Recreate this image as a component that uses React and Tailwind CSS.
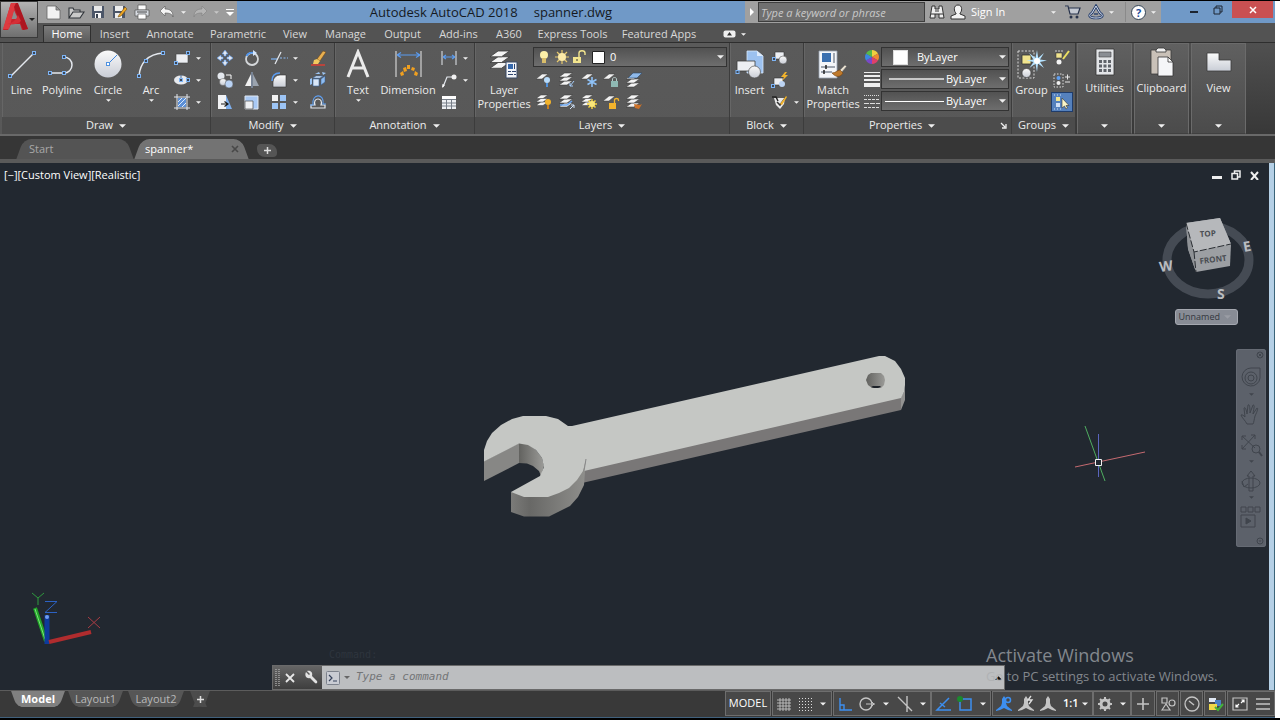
import { useState } from 'react'

const BLUE = '#7db4f5'
const PALE = '#e4e8ee'

function Arrow({ className = 'w-[7px] h-[4px]', color = '#f0f0f0' }) {
  return (
    <svg viewBox="0 0 8 4" className={'shrink-0 ' + className} aria-hidden="true">
      <path d="M0 0h8L4 4z" fill={color} />
    </svg>
  )
}

function Icon({ s = 18, children }) {
  return (
    <svg width={s} height={s} viewBox={`0 0 ${s} ${s}`} fill="none" className="shrink-0" aria-hidden="true">
      {children}
    </svg>
  )
}

function Node({ x, y }) {
  return <rect x={x - 1.5} y={y - 1.5} width="3" height="3" fill="#3d4654" stroke={BLUE} />
}

/* ---------- quick access icons ---------- */

const quick = [
  ['New', <path key="a" d="M2 3h9l4 4v9H2z M11 3v4h4" fill="#f2f2f2" stroke="#666" strokeWidth=".8" />],
  ['Open', <path key="a" d="M2 15V5h4l1 2h6v2M2 15l4-6h11l-4 6z" fill="#c9c9c9" stroke="#2f3338" strokeWidth="1.1" />],
  ['Save', (
    <g key="a">
      <path d="M3 3h12v12H3z" fill="#4c5668" />
      <path d="M5 3h8v5H5z" fill="#e9e9e9" />
      <path d="M6 10h6v5H6z" fill="#f6f6f6" />
      <path d="M7 11h2v4H7z" fill="#39414f" />
    </g>
  )],
  ['Save As', (
    <g key="a">
      <path d="M2 3h12v12H2z" fill="#4c5668" />
      <path d="M4 3h8v5H4zM4 10h7v5H4z" fill="#eee" />
      <path d="M8 12l6-8 2 2-6 7-3 1z" fill="#f0a824" stroke="#6b4a10" strokeWidth=".6" />
    </g>
  )],
  ['Plot', (
    <g key="a">
      <path d="M5 2h8v5H5z" fill="#fafafa" stroke="#555" strokeWidth=".7" />
      <path d="M2 7h14v6H2z" fill="#d8dce2" stroke="#555" strokeWidth=".7" />
      <path d="M5 11h8v5H5z" fill="#fff" stroke="#555" strokeWidth=".7" />
      <path d="M4 9h10" stroke="#444" />
    </g>
  )],
]

/* ---------- large ribbon icons ---------- */

const LineIcon = () => (
  <Icon s={30}>
    <path d="M3 28L27 4" stroke={PALE} strokeWidth="1.5" />
    <Node x={3} y={27} />
    <Node x={27} y={4} />
  </Icon>
)

const PolylineIcon = () => (
  <Icon s={30}>
    <path d="M2 24h15a8 8 0 0 0 0-16" stroke={PALE} strokeWidth="1.5" />
    <Node x={3} y={24} />
    <Node x={17} y={24} />
    <Node x={17} y={8} />
  </Icon>
)

const CircleIcon = () => (
  <Icon s={30}>
    <circle cx="15" cy="15" r="13.5" fill="url(#ball)" />
    <path d="M15 15l9-9" stroke="#3f87dd" />
    <rect x="13.5" y="13.5" width="3" height="3" fill="#fff" stroke="#4f92e0" />
  </Icon>
)

const ArcIcon = () => (
  <Icon s={30}>
    <path d="M3 27C4 14 12 5 27 4" stroke={PALE} strokeWidth="1.5" />
    <Node x={3} y={27} />
    <Node x={10} y={12} />
    <Node x={27} y={4} />
  </Icon>
)

const TextIcon = () => (
  <Icon s={30}>
    <path d="M5 28L15 3l10 25M9 19h12" stroke="#ececec" strokeWidth="3" />
  </Icon>
)

const DimensionIcon = () => (
  <Icon s={30}>
    <path d="M3 2v26M28 2v26" stroke="#c8c8c8" strokeWidth="1.3" />
    <path d="M4 6h23M4 6l4-2.500M4 6l4 2.500M27 6l-4-2.500M27 6l-4 2.500" stroke="#5b9cf0" strokeWidth="1.2" />
    <path d="M7 24l3-2 1 4-3 1zM10 19l3-1 1 4-3 1zM14 16h3v4h-3zM19 18l3 1-1 3-3-1zM22 22l3 2-1 3-3-1z" fill="#f0a020" />
  </Icon>
)

function Stack({ x, y, k = 1, fill = '#f4f4f4' }) {
  return (
    <g transform={`translate(${x} ${y}) scale(${k})`} fill={fill} stroke="#3a3a3a" strokeWidth=".7">
      <path d="M0 15h10l7-5H7z" />
      <path d="M0 10h10l7-5H7z" />
      <path d="M0 5h10l7-5H7z" />
    </g>
  )
}

const LayerPropsIcon = () => (
  <Icon s={30}>
    <Stack x={1} y={2} k={1.15} />
    <path d="M17 13h11v16H17z" fill="#f2f4f8" stroke="#3b4a66" />
    <path d="M19 15h5v5h-5z" fill="#3568ad" />
    <path d="M25.500 15v5M19 22.500h3M23 22.500h4M19 25.500h5M25 25.500h2" stroke="#2f456e" />
  </Icon>
)

const InsertIcon = () => (
  <Icon s={30}>
    <path d="M12 2h10l6 5v17H12z" fill="#9cc1ef" stroke="#d8e8fb" strokeWidth=".8" />
    <path d="M22 2v5h6z" fill="#dceafb" />
    <path d="M2 12h18v10H2z" fill="#eceef2" stroke="#3c3c3c" strokeWidth=".8" />
    <circle cx="19.500" cy="23" r="6" fill="url(#ball)" stroke="#555" strokeWidth=".7" />
    <Node x={2.500} y={23} />
  </Icon>
)

const MatchIcon = () => (
  <Icon s={30}>
    <path d="M1 2h18v27H1z" fill="#f4f6f9" stroke="#9aa4b4" strokeWidth=".8" />
    <path d="M4 4h9v9H4z" fill="#3b70b0" />
    <path d="M16 4v10M3 18h14M3 23h11" stroke="#4a5668" />
    <path d="M8 16v4M6 21v4" stroke="#222" strokeWidth="1.500" />
    <path d="M21 22l6-6 1.500 1.500-5 6z" fill="#e8e0d0" stroke="#6a6a6a" strokeWidth=".5" />
    <path d="M14 24c4 0 5-3 8-3l3 3c-2 4-7 5-11 0z" fill="#bf7a2c" stroke="#713f0d" strokeWidth=".6" />
  </Icon>
)

const GroupIcon = () => (
  <Icon s={30}>
    <path d="M1 2h16v27H1z" stroke="#d5d5d5" strokeDasharray="2 1.500" />
    <path d="M5 6h9v9H5z" fill="#f1e48e" stroke="#333" strokeWidth=".8" />
    <circle cx="9.500" cy="24" r="4.500" fill="url(#ball)" stroke="#333" strokeWidth=".6" />
    <path d="M20 1l1.200 8 5.800-5-4 6.500 7 1-7 1.500 4 6-6-4.500L20 23l-1.500-8.500-6 4.500 4-6-7-1.500 7-1L12 4l6.500 5z" fill="#b4e2ff" />
    <circle cx="20" cy="12" r="3" fill="#fff" />
  </Icon>
)

const UtilitiesIcon = () => (
  <Icon s={30}>
    <path d="M6 2h18v26H6z" fill="#e3e5e8" stroke="#333" strokeWidth=".8" />
    <path d="M9 5h12v5H9z" fill="#8a8e94" stroke="#444" strokeWidth=".6" />
    <path d="M9 13h3v3H9zM13.500 13h3v3h-3zM18 13h3v3h-3zM9 17.500h3v3H9zM13.500 17.500h3v3h-3zM18 17.500h3v3h-3zM9 22h3v3H9zM13.500 22h3v3h-3zM18 22h3v3h-3z" fill="#5f6369" />
  </Icon>
)

const ClipboardIcon = () => (
  <Icon s={30}>
    <path d="M4 3h20v24H4z" fill="#c9c1b8" stroke="#3a3a3a" strokeWidth=".8" />
    <path d="M9 3l2-2h6l2 2v2H9z" fill="#f0f0f0" stroke="#333" strokeWidth=".8" />
    <path d="M11 10h10l5 5v14H11z" fill="#f5f6f8" stroke="#333" strokeWidth=".8" />
    <path d="M21 10v5h5z" fill="#fff" stroke="#333" strokeWidth=".8" />
  </Icon>
)

const ViewIcon = () => (
  <Icon s={30}>
    <path d="M3 6h12v7h12v11H3z" fill="url(#ball)" stroke="#3a3a3a" strokeWidth=".8" />
  </Icon>
)

/* ---------- small ribbon icons ---------- */

const drawSmall = [
  ['Rectangle', <g key="i"><path d="M3 5h12v9H3z" fill="#eceef2" stroke="#444" strokeWidth=".6" /><Node x={3} y={14} /><Node x={15} y={4} /></g>],
  ['Ellipse', <g key="i"><ellipse cx="8" cy="9" rx="7" ry="4.500" fill="#e6e9ee" /><path d="M8 9V4" stroke="#4a6a96" /><Node x={8} y={9} /><Node x={15} y={9} /></g>],
  ['Hatch', <g key="i"><path d="M1 4h16M1 15h16M4 1v16M14 1v16" stroke={PALE} /><path d="M5 5h8v9H5z" fill="#5b8fd6" /><path d="M5 9l4-4M5 13l8-8M9 14l4-4" stroke="#dce9fb" /></g>],
]

const modifySmall = [
  ['Move', <path key="i" d="M9 1l3 4h-2v2H8V5H6zM9 17l3-4h-2v-2H8v2H6zM1 9l4-3v2h2v2H5v2zM17 9l-4-3v2h-2v2h2v2z" fill={PALE} stroke="#5a9af0" strokeWidth=".6" />],
  ['Rotate', <g key="i"><circle cx="9" cy="10" r="6" stroke="#d4d7da" strokeWidth="1.800" /><path d="M3.500 7A6 6 0 0 1 11 4" stroke="#4d94ee" strokeWidth="1.800" /><path d="M10 1l4 3-4 3z" fill="#d5e6fc" /></g>],
  ['Trim', <g key="i"><path d="M1 10h6" stroke={BLUE} strokeWidth="1.200" /><path d="M5 15l6-12" stroke={PALE} strokeWidth="1.300" /><path d="M10 9h8" stroke="#8dbcf5" strokeDasharray="2 1.500" /></g>],
  ['Erase', <g key="i"><path d="M2 16h14" stroke="#e23c30" strokeWidth="1.400" /><path d="M8 10l6-8 3 1-6 9z" fill="#e8b050" stroke="#6a3f10" strokeWidth=".5" /><path d="M4 15l1-4 3-1 3 2-2 3z" fill="#f2c95f" /></g>],
  ['Copy', <g key="i"><circle cx="5" cy="5" r="3.500" fill={PALE} /><circle cx="7" cy="11" r="3.500" fill="url(#ball)" stroke="#555" strokeWidth=".5" /><circle cx="13" cy="13" r="4" fill="#b9d2f4" stroke="#555" strokeWidth=".5" /><path d="M10 4h5v4" stroke="#fff" /></g>],
  ['Mirror', <g key="i"><path d="M8 3v12H2z" fill="#f0f0f0" /><path d="M10 3v12h6z" fill="#9aa3ae" /><path d="M9 1v16" stroke="#a9c8f4" strokeWidth=".8" /></g>],
  ['Fillet', <g key="i"><path d="M3 16V11a7 7 0 0 1 7-7h6v12z" fill="url(#ball)" stroke="#333" strokeWidth=".6" /><path d="M2 10c0-5 3-8 8-8" stroke="#5b9cf0" strokeWidth="1.500" /></g>],
  ['Explode', <g key="i"><path d="M4 7l3-2h7l-3 2zM4 8h6v7H4z" fill="#dbe8f8" stroke="#3b6aa4" strokeWidth=".6" /><path d="M12 8l4-3v6l-4 3z" fill="#8fbcf0" stroke="#2f5b91" strokeWidth=".5" /><path d="M13 1l4 1-3 2zM1 8l2-1v6l-2 1zM6 3l4-2 1 2z" fill="#9cc6f6" /></g>],
  ['Stretch', <g key="i"><path d="M2 2h8v14H2z" fill="#f2f3f5" /><path d="M10 2l6 14h-6z" fill="#7fb0ee" /><path d="M5 11h6M8.500 8.500L12 11l-3.500 2.500" stroke="#1d1d1d" strokeWidth="1.200" /></g>],
  ['Scale', <g key="i"><path d="M2 3h13v13H2z" fill="#a9c9f4" stroke="#e1e8f2" /><path d="M2 8h8v8H2z" fill="#eef0f3" stroke="#4a4a4a" strokeWidth=".7" /></g>],
  ['Array', <g key="i"><path d="M2 2h6v6H2z" fill="#f2f2f2" /><path d="M10 2h6v6h-6zM2 10h6v6H2zM10 10h6v6h-6z" fill="#9cc4f5" /></g>],
  ['Offset', <g key="i"><path d="M2 15h14v-3h-4c3-8-9-8-6 0H2z" stroke={PALE} strokeWidth="1.200" /><path d="M1 12h3C2 0 16 0 14 11h3" stroke="#5f9ff0" strokeWidth="1.100" /></g>],
]

const annotationSmall = [
  ['Linear', <g key="i"><path d="M2 2v14M16 2v14" stroke={PALE} /><path d="M3 8h12M3 8l3-2M3 8l3 2M15 8l-3-2M15 8l-3 2" stroke="#5b9cf0" strokeWidth="1.200" /></g>],
  ['Leader', <g key="i"><path d="M3 16l4-10h5" stroke={PALE} strokeWidth="1.200" /><path d="M2 17l.5-4 2.500 1z" fill="#fff" /><circle cx="14" cy="6" r="2.500" fill="#f2f2f2" /></g>],
  ['Table', <g key="i"><path d="M2 3h14v13H2z" fill="#eef0f3" /><path d="M2 3h14v3H2z" fill="#fff" /><path d="M2 6.500h14M2 10h14M2 13h14M6.500 6.500V16M11.500 6.500V16" stroke="#777e88" /></g>],
]

const gold = '#f2b32c'
const flat = <path d="M1 8h6l6-5H7z" fill="#f2f2f2" stroke="#3a3a3a" strokeWidth=".5" />
const layerSmall = [
  ['Layer Off', <g key="i">{flat}<circle cx="12" cy="9" r="3" fill="#b9dcfb" /><path d="M11 12h2v4h-2z" fill="#4f92dc" /></g>],
  ['Isolate', <g key="i"><Stack x={1} y={2} k={0.8} /><path d="M16 10l-4 5m0-3v3h3" stroke="#a6cdfa" /></g>],
  ['Freeze', <g key="i">{flat}<path d="M12 6v10M7.500 8.500l9 5M16.500 8.500l-9 5" stroke="#8fc2f8" strokeWidth="1.600" /></g>],
  ['Lock', <g key="i">{flat}<path d="M9 10h7v6H9z" fill="#8fb9b3" /><path d="M10.500 10V8c0-2 4-2 4 0v2" stroke="#b7ccc9" /></g>],
  ['Make Current', <g key="i"><Stack x={1} y={4} k={0.8} /><path d="M3 7h9l5-5H8z" fill="#8fb9ea" stroke="#2c4666" strokeWidth=".6" /></g>],
  ['Turn All On', <g key="i"><Stack x={1} y={2} k={0.7} /><circle cx="13" cy="9" r="3" fill={gold} /><path d="M12 12h2v4h-2z" fill="#c97f1b" /></g>],
  ['Unisolate', <g key="i"><Stack x={1} y={2} k={0.8} /><path d="M2 12h7l5-4" stroke="#6aa6f2" strokeWidth="1.600" /><path d="M12 16l4-4m-3 0h3v3" stroke="#cfe3fb" /></g>],
  ['Thaw', <g key="i"><Stack x={1} y={2} k={0.7} /><path d="M12 6v10M7 11h10M8.500 7.500l7 7M15.500 7.500l-7 7" stroke="#f6d33c" strokeWidth="1.500" /><circle cx="12" cy="11" r="3" fill="#fae67a" /></g>],
  ['Unlock', <g key="i">{flat}<path d="M7 10h7v6H7z" fill={gold} /><path d="M12.500 10V7c0-2 4-2 4 0v1" stroke={gold} strokeWidth="1.300" /></g>],
  ['Match Layer', <g key="i"><Stack x={1} y={2} k={0.8} /><path d="M9 11l6 1 2-1-3 5-4-1z" fill="#cc7229" /></g>],
]

const blockSmall = [
  ['Create', <g key="i"><path d="M4 3h9v7H4z" fill="#eceef2" stroke="#333" strokeWidth=".6" /><circle cx="12" cy="11" r="4" fill="url(#ball)" stroke="#444" strokeWidth=".5" /><Node x={3} y={10} /></g>],
  ['Edit', <g key="i"><path d="M3 7h9v7H3z" fill="#eceef2" stroke="#333" strokeWidth=".6" /><circle cx="11" cy="13" r="3" fill="#bcd3f2" /><Node x={2} y={15} /><path d="M14 1l-4 5h3l-2 4 6-6h-3l2-3z" fill={gold} /></g>],
  ['Edit Attributes', <g key="i"><path d="M3 5h11l-1 6-4 5-4-4z" fill="#e9e9e9" /><path d="M1 4h4l2 4" stroke="#222" strokeWidth="1.500" /><path d="M6 9l3 3 6-8" stroke="#333" strokeWidth="1.500" /><path d="M9 11l6-8 1 1-5 8z" fill={gold} /></g>],
]

const groupSmall = [
  ['Ungroup', <g key="i"><path d="M2 2h9" stroke="#ccc" strokeDasharray="2 1" /><path d="M3 4h6v5H3z" fill="#f1e48e" stroke="#333" strokeWidth=".5" /><path d="M10 10l6-8" stroke="#eadf62" strokeWidth="2" /><circle cx="6" cy="13" r="2.500" fill="#f4f4f4" /></g>],
  ['Group Edit', <g key="i"><path d="M1 3h9v13H1z" stroke="#ddd" strokeDasharray="1.500 1.500" /><circle cx="5.500" cy="7" r="2" fill="#5f9ff0" /><circle cx="5.500" cy="12" r="2" fill="#f0f0f0" /><path d="M12 6h5M14.500 3.500v5M12 11h5" stroke="#e8e8e8" /></g>],
  ['Group Selection', <g key="i"><path d="M3 4h4v4H3z" fill="#f1e48e" /><path d="M3 10h4v4H3z" fill="#cfe0f7" /><path d="M1 2h8M1 16h8" stroke="#cfe0f7" strokeDasharray="1 2" /><path d="M9 5v10l2.500-2 1.500 3 1.500-1-1.500-2.500h3z" fill="#fbf6c8" stroke="#333" strokeWidth=".6" /></g>],
]

/* ---------- ribbon parts ---------- */

function Small({ item, arrow, active }) {
  return (
    <div className="flex h-[22px] items-center">
      <button
        type="button"
        aria-label={item[0]}
        className={'flex h-5 w-[22px] items-center justify-center ' + (active ? 'border border-[#1f3c6b] bg-[#5581bd]' : '')}
      >
        <Icon>{item[1]}</Icon>
      </button>
      {arrow && (
        <button type="button" aria-label={item[0] + ' options'} className="flex w-[11px] justify-center">
          <Arrow className="h-[3px] w-[5px]" />
        </button>
      )}
    </div>
  )
}

function Big({ icon, label, arrow, width }) {
  return (
    <button type="button" className={'flex shrink-0 flex-col items-center pt-[2px] ' + width}>
      {icon}
      <span className="mt-1 text-center leading-[14px]">{label}</span>
      {arrow && <Arrow className="mt-[2px] h-[3px] w-[5px]" />}
    </button>
  )
}

function Panel({ title, width, launcher, children }) {
  return (
    <section className={'flex shrink-0 flex-col border-r border-[#3c3c3c] shadow-[inset_1px_0_#666] ' + width}>
      <div className="flex h-[74px] pt-1">{children}</div>
      <div className="flex flex-1 items-center bg-[#4c4c4c]">
        <button type="button" className="flex flex-1 items-center justify-center gap-[6px]">
          {title}
          <Arrow />
        </button>
        {launcher && (
          <button type="button" aria-label={title + ' settings'} className="mr-1">
            <svg width="7" height="7" viewBox="0 0 7 7" fill="none" stroke="#eee" aria-hidden="true">
              <path d="M1 1l4 4M6 2v4H2" strokeWidth="1.300" />
            </svg>
          </button>
        )}
      </div>
    </section>
  )
}

function Collapsed({ label, icon }) {
  return (
    <button type="button" className="mr-[2px] flex w-[55px] shrink-0 flex-col items-center border border-[#6b6b6b] border-b-[#404040] bg-linear-to-b from-[#606060] to-[#4b4b4b] pt-[3px]">
      {icon}
      <span className="mt-1 leading-[14px]">{label}</span>
      <Arrow className="mt-auto mb-[5px] h-1 w-[7px]" />
    </button>
  )
}

function Combo({ label, value, before, className = '' }) {
  return (
    <div className={'flex h-5 items-center border border-[#333] bg-linear-to-b from-[#525252] to-[#6e6e6e] pr-[2px] ' + className}>
      {before}
      <select aria-label={label} className="min-w-0 flex-1 appearance-none bg-transparent leading-4 text-white outline-none">
        <option>{value}</option>
      </select>
      <Arrow />
    </div>
  )
}

function Ribbon() {
  return (
    <div className="flex h-[92px] border-t border-[#2e2e2e] bg-linear-to-b from-[#5a5a5a] to-[#585858] pl-[2px]">
      <Panel title="Draw" width="w-[209px]">
        <Big icon={<LineIcon />} label="Line" width="w-[39px]" />
        <Big icon={<PolylineIcon />} label="Polyline" width="w-[42px]" />
        <Big icon={<CircleIcon />} label="Circle" arrow width="w-[50px]" />
        <Big icon={<ArcIcon />} label="Arc" arrow width="w-9" />
        <div className="pl-[2px]">
          {drawSmall.map((item) => <Small key={item[0]} item={item} arrow />)}
        </div>
      </Panel>

      <Panel title="Modify" width="w-[124px]">
        <div className="grid grid-cols-[27px_27px_39px_22px] content-start pl-[3px]">
          {modifySmall.map((item, i) => <Small key={item[0]} item={item} arrow={i % 4 === 2} />)}
        </div>
      </Panel>

      <Panel title="Annotation" width="w-[140px]">
        <Big icon={<TextIcon />} label="Text" arrow width="w-[46px]" />
        <Big icon={<DimensionIcon />} label="Dimension" width="w-[54px]" />
        <div className="pl-[3px]">
          {annotationSmall.map((item, i) => <Small key={item[0]} item={item} arrow={i < 2} />)}
        </div>
      </Panel>

      <Panel title="Layers" width="w-[255px]">
        <Big icon={<LayerPropsIcon />} label={<>Layer<br />Properties</>} width="w-[58px]" />
        <div className="flex-1 pr-[2px]">
          <Combo
            label="Layer"
            value="0"
            before={
              <svg width="76" height="18" viewBox="0 0 76 18" fill="none" aria-hidden="true">
                <circle cx="10" cy="7" r="4" fill="#fdf0a8" />
                <path d="M8 10h4v5H8z" fill="#d9bd6a" />
                <path d="M28 2v14M21 9h14M23 4l10 10M33 4L23 14" stroke="#e8c96a" strokeWidth="1.200" />
                <circle cx="28" cy="9" r="4" fill="#fbe9a8" />
                <path d="M39 9h8v6h-8z" fill="#f3e58e" />
                <path d="M45 9V5c0-3 6-3 6 0v2" stroke="#f3e58e" strokeWidth="1.400" />
                <path d="M43 11v2" stroke="#333" />
                <path d="M58.500 3.500h12v12h-12z" fill="#fff" stroke="#222" />
              </svg>
            }
          />
          <div className="grid grid-cols-[23px_22px_22px_23px_22px] pt-[2px]">
            {layerSmall.map((item) => <Small key={item[0]} item={item} />)}
          </div>
        </div>
      </Panel>

      <Panel title="Block" width="w-[74px]">
        <Big icon={<InsertIcon />} label="Insert" width="w-[39px]" />
        <div>
          {blockSmall.map((item, i) => <Small key={item[0]} item={item} arrow={i === 2} />)}
        </div>
      </Panel>

      <Panel title="Properties" width="w-[208px]" launcher>
        <Big icon={<MatchIcon />} label={<>Match<br />Properties</>} width="w-[58px]" />
        <div className="flex w-[19px] flex-col items-center pt-[3px]">
          <svg width="16" height="63" viewBox="0 0 16 63" fill="none" aria-hidden="true">
            <path d="M8 7V0a7 7 0 0 1 6 3.500z" fill="#f0d040" />
            <path d="M8 7l6-3.500a7 7 0 0 1 0 7z" fill="#f08a30" />
            <path d="M8 7l6 3.500A7 7 0 0 1 8 14z" fill="#e0406a" />
            <path d="M8 7v7a7 7 0 0 1-6-3.500z" fill="#7a48c8" />
            <path d="M8 7l-6 3.500a7 7 0 0 1 0-7z" fill="#3c86e0" />
            <path d="M8 7L2 3.500A7 7 0 0 1 8 0z" fill="#58b848" />
            <path d="M0 22.500h16" stroke="#eee" />
            <path d="M0 26h16" stroke="#eee" strokeWidth="2" />
            <path d="M0 30h16" stroke="#eee" strokeWidth="2" />
            <path d="M0 35h16" stroke="#eee" strokeWidth="4" />
            <path d="M0 45.500h16" stroke="#ddd" strokeDasharray="1 1" />
            <path d="M0 49.500h16M0 57.500h16" stroke="#ddd" strokeDasharray="3 1" />
            <path d="M0 53.500h16" stroke="#ddd" strokeDasharray="5 1" />
          </svg>
        </div>
        <div className="flex flex-1 flex-col gap-[2px] pr-[2px]">
          <Combo
            label="Object colour"
            value="ByLayer"
            before={<span className="mr-[9px] ml-[11px] size-[15px] border border-[#ddd] bg-white" />}
          />
          <Combo
            label="Lineweight"
            value="ByLayer"
            before={<span className="mr-[2px] ml-[7px] h-[2px] w-[55px] bg-[#c8c8c8]" />}
          />
          <Combo
            label="Linetype"
            value="ByLayer"
            before={<span className="mr-[2px] ml-[3px] h-px w-[59px] bg-white" />}
          />
        </div>
      </Panel>

      <Panel title="Groups" width="w-[64px]">
        <Big icon={<GroupIcon />} label="Group" width="w-[39px]" />
        <div>
          {groupSmall.map((item, i) => <Small key={item[0]} item={item} active={i === 2} />)}
        </div>
      </Panel>

      <div className="flex flex-1 bg-linear-to-b from-[#505050] to-[#383838] pl-px">
        <Collapsed label="Utilities" icon={<UtilitiesIcon />} />
        <Collapsed label="Clipboard" icon={<ClipboardIcon />} />
        <Collapsed label="View" icon={<ViewIcon />} />
      </div>
    </div>
  )
}

/* ---------- title bar and tabs ---------- */

function TitleBar() {
  return (
    <div className="flex h-[22px] bg-[#7099c7]">
      <div className="flex w-[199px] shrink-0 items-center bg-[#9c9c9c] pl-[5px]">
        {quick.map(([name, art]) => (
          <button key={name} type="button" aria-label={name} className="flex w-[22px] justify-center">
            <Icon>{art}</Icon>
          </button>
        ))}
        <button type="button" aria-label="Undo" className="ml-[5px] flex w-[18px] justify-center">
          <Icon s={16}><path d="M1 7l5-5v3c6 0 8 3 8 8-1-3-3-4-8-4v3z" fill="#f4f4f4" stroke="#555" strokeWidth=".6" /></Icon>
        </button>
        <span className="flex w-[15px] justify-center"><Arrow className="h-[3px] w-[5px]" /></span>
        <button type="button" aria-label="Redo" className="flex w-[18px] justify-center">
          <Icon s={16}><path d="M15 7l-5-5v3c-6 0-8 3-8 8 1-3 3-4 8-4v3z" fill="#b4b4b4" stroke="#808080" strokeWidth=".6" /></Icon>
        </button>
        <span className="flex w-[14px] justify-center"><Arrow className="h-[3px] w-[5px]" color="#c8c8c8" /></span>
        <button type="button" aria-label="Customize toolbar" className="flex w-[14px] flex-col items-center gap-[2px]">
          <span className="h-px w-2 bg-white" />
          <Arrow className="h-1 w-2" color="#fff" />
        </button>
      </div>

      <h1 className="flex flex-1 items-center justify-center gap-4 pt-[2px] text-[13px] text-[#15191f]">
        <span>Autodesk AutoCAD 2018</span>
        <span>spanner.dwg</span>
      </h1>

      <div className="flex w-[416px] shrink-0 items-center bg-[#a0a0a0]">
        <button type="button" aria-label="Collapse search" className="flex w-[13px] justify-center">
          <svg width="4" height="8" viewBox="0 0 4 8" aria-hidden="true"><path d="M0 0v8l4-4z" fill="#fff" /></svg>
        </button>
        <input
          type="text"
          aria-label="Search help"
          placeholder="Type a keyword or phrase"
          className="h-[20px] w-[167px] border border-[#3e3e3e] bg-[#707070] px-[2px] text-[11px] text-white italic outline-none placeholder:text-[#c9c9c9]"
        />
        <button type="button" aria-label="Search" className="flex w-[24px] justify-center">
          <Icon>
            <path d="M4 3h3v3h4V3h3l2 12h-5v-4H7v4H2z" fill="#eee" stroke="#333" />
            <path d="M3 11h4M11 11h4M7 8h4" stroke="#333" />
          </Icon>
        </button>
        <button type="button" className="flex items-center gap-1 text-white">
          <Icon>
            <path d="M9 2c5 0 4 7 2 8v1l5 2v3H2v-3l5-2v-1C5 9 4 2 9 2z" fill="#f4f4f4" stroke="#333" />
          </Icon>
          Sign In
        </button>
        <span className="ml-auto flex w-[14px] justify-center"><Arrow className="h-[3px] w-[5px]" /></span>
        <button type="button" aria-label="App store" className="flex w-[26px] justify-center">
          <Icon>
            <path d="M1 3h3l2 8h8l2-6H5" fill="#c4c9d2" stroke="#27324a" strokeWidth="1.200" />
            <circle cx="7" cy="14" r="1.500" fill="#27324a" />
            <circle cx="13" cy="14" r="1.500" fill="#27324a" />
          </Icon>
        </button>
        <button type="button" aria-label="A360" className="flex w-[20px] justify-center">
          <Icon s={16}>
            <path d="M8 2l4 7c4 2 3 5-4 5s-8-3-4-5z" stroke="#27406e" strokeWidth="2.600" />
            <path d="M8 2l4 7c4 2 3 5-4 5s-8-3-4-5z" stroke="#d8dfec" strokeWidth="1" />
            <path d="M6 10h4" stroke="#27406e" strokeWidth="1.400" />
          </Icon>
        </button>
        <span className="flex w-[10px] justify-center"><Arrow className="h-[3px] w-[5px]" /></span>
        <span className="mr-[5px] ml-[9px] h-5 w-px bg-[#8a8a8a]" />
        <button type="button" aria-label="Help" className="flex size-[15px] items-center justify-center rounded-full border border-[#345] bg-white text-[11px] leading-none font-bold text-[#1f4f9c]">
          ?
        </button>
        <span className="flex w-[15px] justify-center"><Arrow className="h-[3px] w-[5px]" /></span>
      </div>

      <div className="flex w-[114px] shrink-0 items-start pl-[21px]">
        <button type="button" aria-label="Minimize" className="flex h-[18px] w-6 items-center justify-center">
          <span className="mt-[4px] h-[2px] w-2 bg-[#1c2430]" />
        </button>
        <button type="button" aria-label="Restore" className="flex h-[18px] w-[24px] items-center justify-center">
          <Icon s={10}><path d="M1 3h6v6H1zM3 3V1h6v6H7" stroke="#1c2430" /></Icon>
        </button>
        <button type="button" aria-label="Close" className="ml-[2px] flex h-[17px] w-[41px] items-center justify-center bg-[#c95052]">
          <Icon s={8}><path d="M1 1l6 6M7 1L1 7" stroke="#fff" strokeWidth="1.500" /></Icon>
        </button>
      </div>
    </div>
  )
}

const menus = [
  ['Home', 'w-[48px]'],
  ['Insert', 'w-[47px]'],
  ['Annotate', 'w-[64px]'],
  ['Parametric', 'w-[72px]'],
  ['View', 'w-[42px]'],
  ['Manage', 'w-[59px]'],
  ['Output', 'w-[55px]'],
  ['Add-ins', 'w-[57px]'],
  ['A360', 'w-[44px]'],
  ['Express Tools', 'w-[83px]'],
  ['Featured Apps', 'w-[90px]'],
]

function Header() {
  const [tab, setTab] = useState('Home')
  return (
    <header className="flex h-[41px] bg-[#535353]">
      <button type="button" aria-label="Application menu" className="flex h-[37px] w-[38px] shrink-0 items-center border border-[#3a3a3a] bg-linear-to-b from-[#b4b4b4] to-[#6f6f6f] pl-[2px]">
        <svg width="25" height="30" viewBox="0 0 25 30" className="-mt-[5px]" aria-hidden="true">
          <path d="M8 1h6l11 26-6 1-2-6H8l-3 6H0z" fill="#c8232c" />
          <path d="M11 8l4 9H8z" fill="#8d8d8d" />
          <path d="M8 1h5L6 27H0z" fill="#dd3a40" />
          <path d="M13 1h2l10 26-5 1L11 5z" fill="#ad1620" />
          <path d="M4 22c6-1 9-4 11-9l3 6c-3 3-8 4-14 3z" fill="#d52f37" />
        </svg>
        <Arrow className="ml-px h-[3px] w-[6px]" color="#222" />
      </button>
      <div className="flex min-w-0 flex-1 flex-col">
        <TitleBar />
        <nav className="flex flex-1 items-end pl-[5px]">
          {menus.map(([name, width]) => (
            <button
              key={name}
              type="button"
              onClick={() => setTab(name)}
              className={
                'h-[17px] shrink-0 whitespace-nowrap ' + width +
                (tab === name
                  ? ' border border-b-0 border-[#2f2f2f] bg-linear-to-b from-[#7b7b7b] to-[#5c5c5c] leading-[14px] text-white'
                  : ' leading-4 text-[#d8d8d8]')
              }
            >
              {name}
            </button>
          ))}
          <button type="button" aria-label="Minimize ribbon" className="ml-[19px] flex h-4 items-center gap-[5px]">
            <svg width="13" height="8" viewBox="0 0 13 8" aria-hidden="true">
              <rect x=".5" y=".5" width="12" height="7" rx="2" fill="#f0f0f0" />
              <path d="M4 5.500L6.500 2 9 5.500z" fill="#333" />
            </svg>
            <Arrow className="h-[3px] w-[5px]" />
          </button>
        </nav>
      </div>
    </header>
  )
}

/* slanted tabs: two overlapping skewed layers, the box itself stays clear */
const fileTab =
  "relative isolate flex h-[20px] items-center bg-clip-text before:absolute before:inset-y-0 before:left-0 before:-z-10 before:w-4/5 before:-skew-x-[20deg] before:rounded-tl-lg before:bg-inherit after:absolute after:inset-y-0 after:right-0 after:-z-10 after:w-4/5 after:skew-x-[20deg] after:rounded-tr-lg after:bg-inherit before:[background-clip:border-box] after:[background-clip:border-box] before:content-[''] after:content-[''] "

function FileTabs() {
  return (
    <div className="border-t-2 border-b-4 border-t-[#696969] border-b-[#5a5a5a] bg-[#363636]">
      <div className="flex h-[23px] items-end pl-[20px]">
        <button type="button" className={fileTab + 'w-[110px] bg-[#545454] pl-[9px] text-[#a8a8a8]'}>Start</button>
        <div className={fileTab + 'z-10 ml-2 w-[107px] bg-[#737373] pr-[5px] pl-[7px] text-white'}>
          <button type="button">spanner*</button>
          <button type="button" aria-label="Close spanner" className="ml-auto">
            <Icon s={9}><path d="M1 1l6 6M7 1L1 7" stroke="#484848" strokeWidth="1.600" /></Icon>
          </button>
        </div>
        <button type="button" aria-label="New drawing" className="mb-[2px] ml-[12px] flex h-[13px] w-[20px] items-center justify-center rounded-tl-sm rounded-tr-lg rounded-br-sm rounded-bl-lg bg-[#555]">
          <Icon s={9}><path d="M1 4.500h7M4.500 1v7" stroke="#ddd" strokeWidth="1.500" /></Icon>
        </button>
      </div>
    </div>
  )
}

/* ---------- drawing area ---------- */

function Spanner() {
  return (
    <svg width="450" height="190" viewBox="0 0 450 190" className="absolute top-[177px] left-[470px]" role="img" aria-label="Spanner model">
      <defs>
        <linearGradient id="head" x1="0" x2="1">
          <stop offset="0" stopColor="#7b7b79" />
          <stop offset=".25" stopColor="#686866" />
          <stop offset="1" stopColor="#8f8f8c" />
        </linearGradient>
        <linearGradient id="jaw" x1="0" x2="1">
          <stop offset="0" stopColor="#62625f" />
          <stop offset="1" stopColor="#9b9b98" />
        </linearGradient>
      </defs>
      <path d="M112 130L431 57v13L112 143z" fill="#797777" />
      <path d="M431 57l3-5 1-8v16l-4 10z" fill="#929291" />
      <path d="M116 119l-2 26-6 12-8 9-10 5-11 5.500H54L41 172v-20h40z" fill="url(#head)" />
      <path d="M14 121l35-18v20L14 141z" fill="#878785" />
      <path d="M49 103l9 1 8 6 6 8 2 8-3 10-2-5-6-5-6-2.500-8-.5z" fill="url(#jaw)" />
      <path
        d="M14 121.500V110l3-9 5-8 9-8 11-6 11-3h23l12 3 10 7h4L409 16h6l10 5 6 8 4 9v7l-1 7-3 6-317 73 2-12-3 12-6 9-8 8-10 5-11 4H54l-13-5 29-16 4-9-2-9-6-8-8-5-9-1.500z"
        fill="#c5c7c4"
      />
      <path d="M116 119l-2 12" stroke="#888" fill="none" />
      <path d="M401 33h10l3 3 1 4-1 5-3 3h-9l-4-3-2-5 2-5z" fill="url(#jaw)" />
      <path d="M401 47l2-1h7l1 1-3 1h-4z" fill="#1c2128" />
    </svg>
  )
}

function ViewCube() {
  return (
    <div className="absolute top-[46px] right-[2px] flex w-[112px] flex-col items-center">
      <svg width="112" height="96" viewBox="-4 0 112 96" role="img" aria-label="View cube">
        <ellipse cx="49" cy="51" rx="41" ry="34" fill="none" stroke="#454b54" strokeWidth="9" />
        <path d="M27 14l34-5 11 26-1 22-34 6-8-23z" fill="#9c9fa3" />
        <path d="M27 14l34-5 11 26-37 8z" fill="#b6b8bb" />
        <path d="M27 14l8 29 2 20-8-23z" fill="#8f9296" />
        <path d="M27 14l8 29 37-8M35 43l2 20" fill="none" stroke="#2a2e33" strokeDasharray="7 2" />
        <text x="41" y="28" fontSize="8" fontWeight="700" fill="#4a4d52" transform="rotate(-4 41 28)">TOP</text>
        <text x="41" y="55" fontSize="8" fontWeight="700" fill="#4a4d52" transform="rotate(-7 41 55)">FRONT</text>
        <g fontSize="14" fontWeight="700" fill="#b9bcc0">
          <text x="1" y="63" transform="rotate(-8 1 63)">W</text>
          <text x="85" y="43" transform="rotate(-10 85 43)">E</text>
          <text x="58" y="90">S</text>
        </g>
      </svg>
      <button type="button" className="mt-[4px] mr-[10px] flex h-4 w-[63px] items-center justify-between rounded-[3px] border border-[#a5a8b0] bg-[#888c95] px-[3px] text-[9px] leading-3 text-[#33373e]">
        Unnamed
        <Arrow className="mr-[3px] h-1 w-[7px]" color="#9a9da5" />
      </button>
    </div>
  )
}

function NavBar() {
  const tools = [
    ['Steering wheel', <g key="n"><path d="M12 2h9v10a9 9 0 1 1-9-10z" /><circle cx="12" cy="12" r="6" /><circle cx="12" cy="12" r="3" /></g>, true],
    ['Pan', <path key="n" d="M8 22c-2-4-5-6-6-9 1-1 3 1 4 2L5 6c1-1 2 0 3 6l1-9c1-1 2 0 2 8l3-8c2 0 1 2 0 9l4-6c1 0 1 2-2 8-1 4-1 6-2 8z" />, false],
    ['Zoom', <g key="n"><path d="M3 3l13 12M16 2L3 16M3 7V3h4M12 2h4v4M3 12v4h4" /><circle cx="17" cy="16" r="4" /><path d="M20 19l3 4" strokeWidth="2" /></g>, true],
    ['Orbit', <g key="n"><path d="M10 22V7H8l4-5 4 5h-2v15z" /><ellipse cx="12" cy="14" rx="9" ry="5" /><path d="M3 12l2 6 4-3" /></g>, true],
    ['ShowMotion', <g key="n"><path d="M2 2h5v5H2zM9 2h5v5H9zM16 2h5v5h-5zM2 10h14v12H2z" /><path d="M7 13v6l5-3z" fill="#40454d" /></g>, false],
  ]
  return (
    <div className="absolute top-[186px] right-[3px] flex h-[198px] w-[30px] flex-col items-center rounded-[3px] bg-[#5c616a] py-[2px] shadow-[inset_0_0_0_1px_#666b74]">
      <button type="button" aria-label="Close navigation bar" className="mr-[2px] self-end">
        <Icon s={8}><circle cx="4" cy="4" r="3" stroke="#40454d" /><path d="M2.500 2.500l3 3M5.500 2.500l-3 3" stroke="#40454d" /></Icon>
      </button>
      <div className="flex flex-1 flex-col items-center justify-between pt-[7px] pb-2">
        {tools.map(([name, art, more]) => (
          <button key={name} type="button" aria-label={name} className="flex flex-col items-center gap-[3px]">
            <svg width="24" height="24" viewBox="0 0 24 24" fill="none" stroke="#40454d" aria-hidden="true">{art}</svg>
            {more && <Arrow className="h-[3px] w-[5px]" color="#40454d" />}
          </button>
        ))}
      </div>
      <button type="button" aria-label="Navigation options" className="mr-[2px] self-end">
        <Icon s={8}><circle cx="4" cy="4" r="3" stroke="#40454d" /><path d="M2.500 3.500h3L4 5z" fill="#40454d" /></Icon>
      </button>
    </div>
  )
}

function CommandLine() {
  return (
    <div className="absolute right-[264px] bottom-0 left-[272px] flex h-[25px] border border-[#6a6a6a] bg-[#bcbec0]">
      <div className="flex w-[49px] shrink-0 items-center bg-linear-to-b from-[#666] to-[#3e3e3e] pl-[2px]">
        <svg width="5" height="17" viewBox="0 0 5 17" aria-hidden="true">
          <path d="M1 0v17M4 0v17" stroke="#aaa" strokeWidth="1.400" strokeDasharray="1 1" />
        </svg>
        <button type="button" aria-label="Close command line" className="ml-[2px] flex size-4 items-center justify-center">
          <Icon s={10}><path d="M1 1l8 8M9 1L1 9" stroke="#e8e8e8" strokeWidth="1.800" /></Icon>
        </button>
        <button type="button" aria-label="Customize" className="ml-[5px]">
          <Icon s={16}>
            <path d="M3 2l3 3 1-1-3-3c4-1 6 2 5 5l5 5c1 2-1 3-2 2L7 8C4 9 1 6 3 2z" fill="#e2e2e2" />
          </Icon>
        </button>
      </div>
      <button type="button" aria-label="Recent commands" className="flex items-center gap-1 pl-1">
        <svg width="14" height="14" viewBox="0 0 14 14" fill="none" aria-hidden="true">
          <rect x=".5" y=".5" width="13" height="13" rx="1" fill="#c9ccd3" stroke="#7d828c" />
          <path d="M3 4l3 3-3 3M7 10h4" stroke="#37435c" strokeWidth="1.200" />
        </svg>
        <Arrow className="h-[3px] w-[6px]" color="#666" />
      </button>
      <input
        type="text"
        aria-label="Command"
        placeholder="Type a command"
        className="min-w-0 flex-1 bg-transparent pl-[6px] font-['DejaVu_Sans_Mono',monospace] text-[11px] text-[#333] italic outline-none placeholder:text-[#737577]"
      />
      <button type="button" aria-label="Command history" className="flex w-3 items-center justify-center">
        <Arrow className="h-1 w-[7px] rotate-180" color="#111" />
      </button>
    </div>
  )
}

function Axes() {
  return (
    <>
      <svg width="80" height="60" viewBox="0 0 80 60" fill="none" className="absolute top-[262px] left-[1070px]" aria-hidden="true">
        <path d="M5 42L75 27" stroke="#c56a70" />
        <path d="M15 1l20 55" stroke="#4fae60" />
        <path d="M28.500 9v43" stroke="#5a65bd" />
        <path d="M25.500 34.500h6v6h-6z" fill="#222830" stroke="#f2f2f2" />
      </svg>
      <svg width="80" height="60" viewBox="0 0 80 60" fill="none" className="absolute bottom-[42px] left-[25px]" role="img" aria-label="X, Y and Z axes">
        <path d="M21 53L10 20" stroke="#22a528" strokeWidth="4" />
        <path d="M20 51L10 21" stroke="#7be07a" strokeWidth="1" />
        <path d="M22 56V27" stroke="#0d3a9c" strokeWidth="5" />
        <circle cx="22" cy="29" r="2" fill="#6f9cf0" />
        <path d="M24 54l42-10" stroke="#b02c2e" strokeWidth="4" />
        <path d="M7 5l6 5 6-5M13 10v7" stroke="#2f9a3e" />
        <path d="M20 13.500h12L20 24.500h12" stroke="#2c62c4" />
        <path d="M63 29l12 11M75 29L63 40" stroke="#a83c44" />
      </svg>
    </>
  )
}

function Canvas() {
  return (
    <main className="flex min-h-0 flex-1">
      <div className="relative flex-1 overflow-hidden bg-[#222830]">
        <div className="flex items-start justify-between pt-1 pr-[10px] pl-1 text-white">
          <div className="flex leading-4">
            <button type="button">[−]</button>
            <button type="button">[Custom View]</button>
            <button type="button">[Realistic]</button>
          </div>
          <div className="flex gap-[9px] pt-[3px]">
            <button type="button" aria-label="Minimize drawing"><Icon s={10}><path d="M0 7.500h10" stroke="#eee" strokeWidth="3" /></Icon></button>
            <button type="button" aria-label="Restore drawing"><Icon s={10}><path d="M1 3.500h5.500V9H1zM3.500 3V1H9v6H7" stroke="#eee" strokeWidth="1.500" /></Icon></button>
            <button type="button" aria-label="Close drawing"><Icon s={9}><path d="M1 1l7 8M8 1L1 9" stroke="#eee" strokeWidth="2" /></Icon></button>
          </div>
        </div>
        <Spanner />
        <Axes />
        <ViewCube />
        <NavBar />
        <p className="absolute bottom-[27px] left-[329px] font-['DejaVu_Sans_Mono',monospace] text-[10px] leading-4 text-[#2e353e]">Command:</p>
        <CommandLine />
        <div className="pointer-events-none absolute right-[45px] bottom-[5px] w-[238px] whitespace-nowrap text-[#82878d]">
          <p className="text-[18px] leading-6">Activate Windows</p>
          <p className="text-[13px] leading-[18px]"><span className="text-[#b0b2b4]">Go</span> to PC settings to activate Windows.</p>
        </div>
      </div>
      <div className="w-[6px] shrink-0 border-r border-[#3b6479] bg-[#b5d0e6]" />
    </main>
  )
}

/* ---------- status bar ---------- */

const sheetTab =
  "relative isolate h-4 bg-clip-text text-center leading-[14px] before:absolute before:inset-y-0 before:left-0 before:-z-10 before:w-4/5 before:skew-x-[20deg] before:rounded-bl-md before:bg-inherit after:absolute after:inset-y-0 after:right-0 after:-z-10 after:w-4/5 after:-skew-x-[20deg] after:rounded-br-md after:bg-inherit before:[background-clip:border-box] after:[background-clip:border-box] before:content-[''] after:content-[''] "

const G = '#c4c4c4'
const B = '#3d8ff0'

function Tool({ label, w = 'w-[22px]', children }) {
  return (
    <button type="button" aria-label={label} className={'flex h-full items-center justify-center ' + w}>
      <Icon>{children}</Icon>
    </button>
  )
}

function More({ w = 'w-4' }) {
  return (
    <button type="button" aria-label="More options" className={'flex h-full items-center justify-center ' + w}>
      <Arrow className="h-1 w-[6px]" />
    </button>
  )
}

function Cell({ children, className = '' }) {
  return <div className={'flex h-[25px] shrink-0 items-center border border-[#6e6e6e] bg-[#484848] ' + className}>{children}</div>
}

const figure = 'M9 1l2 3v4l1 3 5 4v1l-4-1-4-2-4 2-4 1v-1l5-4 1-3V4z'

function StatusBar() {
  return (
    <footer className="flex h-[27px] shrink-0 items-start border-t border-[#5c5c5c] bg-[#393939]">
      <button type="button" className={sheetTab + 'ml-[14px] w-[48px] bg-[#808080] font-bold text-white'}>Model</button>
      <button type="button" className={sheetTab + 'ml-[9px] w-[49px] bg-[#565656] text-[#b9b9b9]'}>Layout1</button>
      <button type="button" className={sheetTab + 'ml-[11px] w-[50px] bg-[#565656] text-[#b9b9b9]'}>Layout2</button>
      <button type="button" aria-label="New layout" className={sheetTab + 'ml-[12px] flex w-[14px] items-center justify-center bg-[#4c4c4c]'}>
        <Icon s={9}><path d="M1 4.500h7M4.500 1v7" stroke="#ddd" strokeWidth="1.500" /></Icon>
      </button>

      <div className="ml-auto flex gap-px">
        <Cell><button type="button" className="w-[44px] text-white">MODEL</button></Cell>
        <Cell className="w-[60px]">
          <Tool label="Grid"><path d="M5 3v13M8 3v13M11 3v13M14 3v13M2 5h14M2 8h14M2 11h14M2 14h14" stroke={G} strokeWidth=".9" /></Tool>
          <Tool label="Snap"><path d="M3 3.500h13M3 6.500h13M3 9.500h13M3 12.500h13M3 15.500h13" stroke="#ddd" strokeDasharray="1 2" /></Tool>
          <More />
        </Cell>
        <Cell className="w-[98px]">
          <Tool label="Ortho"><path d="M4 3v12h12M4 10h4v5" stroke={B} strokeWidth="1.400" /></Tool>
          <Tool label="Polar tracking"><circle cx="8" cy="9" r="6" stroke={G} strokeWidth="1.400" /><path d="M8 9h9M13 6l3 3-3 3" stroke={G} /></Tool>
          <More />
          <Tool label="Isometric drafting"><path d="M2 2l14 14M11 1v16" stroke={G} strokeWidth="1.400" /></Tool>
          <More w="w-[14px]" />
        </Cell>
        <Cell className="-ml-px w-[60px]">
          <Tool label="Object snap tracking"><path d="M15 3L3 15h14M6 8l5 4" stroke={B} strokeWidth="1.500" /></Tool>
          <Tool label="Object snap"><path d="M4 4h11v11H4z" stroke={B} strokeWidth="1.500" /><circle cx="4" cy="4" r="3" fill="#1b8a2e" /></Tool>
          <More w="w-[14px]" />
        </Cell>
        <Cell className="w-[101px]">
          <Tool label="Annotation visibility"><path d={figure} fill={B} /><circle cx="13" cy="5" r="2.500" fill="#484848" stroke={B} strokeWidth="1.500" /></Tool>
          <Tool label="Auto scale"><path d={figure} fill={G} /><path d="M14 1l-3 4h4l-3 4" stroke="#e0e0e0" strokeWidth="1.300" /></Tool>
          <Tool label="Annotation scale"><path d={figure} fill={G} /></Tool>
          <button type="button" className="flex h-full items-center gap-[3px] pl-[4px] font-semibold text-white">
            1:1
            <Arrow className="h-1 w-[6px]" />
          </button>
        </Cell>
        <Cell className="-ml-px w-[38px]">
          <Tool label="Workspace">
            <circle cx="9" cy="9" r="4" stroke={G} strokeWidth="3" />
            <path d="M9 2v3M9 13v3M2 9h3M13 9h3M4 4l2 2M12 12l2 2M14 4l-2 2M6 12l-2 2" stroke={G} strokeWidth="2" />
          </Tool>
          <More w="w-[14px]" />
        </Cell>
        <Cell className="-ml-px w-[24px] justify-center"><Tool label="Annotation monitor"><path d="M3 9h12M9 3v12" stroke={G} strokeWidth="1.600" /></Tool></Cell>
        <Cell className="w-[23px] justify-center">
          <Tool label="Isolate objects" w="w-5"><path d="M3 3h5v5H3zM3 15l4-6 4 6z" stroke={G} strokeWidth="1.200" /><circle cx="13" cy="8" r="3" stroke={G} strokeWidth="1.200" /></Tool>
        </Cell>
        <Cell className="w-[23px] justify-center">
          <Tool label="Hardware acceleration" w="w-5"><circle cx="9" cy="9" r="7" stroke={G} strokeWidth="1.300" /><path d="M6 6l5 4" stroke={G} strokeWidth="1.500" /></Tool>
        </Cell>
        <Cell className="w-[22px] justify-center">
          <Tool label="Trusted file" w="w-5"><path d="M3 3h7v4H3z" fill="#dfe7f2" /><path d="M9 5h6v6H9z" fill="#4a80c4" /><path d="M3 9h8v6H3z" fill="#f0d848" /><path d="M9 12l3 3 5-6" stroke="#43b13a" strokeWidth="2" /></Tool>
        </Cell>
        <Cell className="w-[48px]">
          <Tool label="Clean screen" w="w-6"><path d="M2 3h14v12H2z" stroke={G} strokeWidth="1.200" /><path d="M5 12l3-3M10 8l3-3M5 9.500V12h2.500M10.500 5H13v2.500" stroke="#fff" strokeWidth="1.200" /></Tool>
          <Tool label="Customization"><path d="M2 4h14M2 9h14M2 14h14" stroke={G} strokeWidth="1.500" /></Tool>
        </Cell>
      </div>
    </footer>
  )
}

export default function App() {
  return (
    <div className="flex h-screen flex-col overflow-hidden border-t border-b-2 border-black bg-white font-['Open_Sans','Noto_Sans',sans-serif] text-[11px] text-[#ececec]">
      <svg width="0" height="0" className="absolute" aria-hidden="true">
        <defs>
          <linearGradient id="ball" x1="0" y1="0" x2="0" y2="1">
            <stop offset="0" stopColor="#fafafa" />
            <stop offset="1" stopColor="#c9cdd6" />
          </linearGradient>
        </defs>
      </svg>
      <div className="mr-[5px] flex min-h-0 flex-1 flex-col border-b border-[#41617d] bg-[#363636]">
        <Header />
        <Ribbon />
        <FileTabs />
        <Canvas />
        <StatusBar />
      </div>
    </div>
  )
}
